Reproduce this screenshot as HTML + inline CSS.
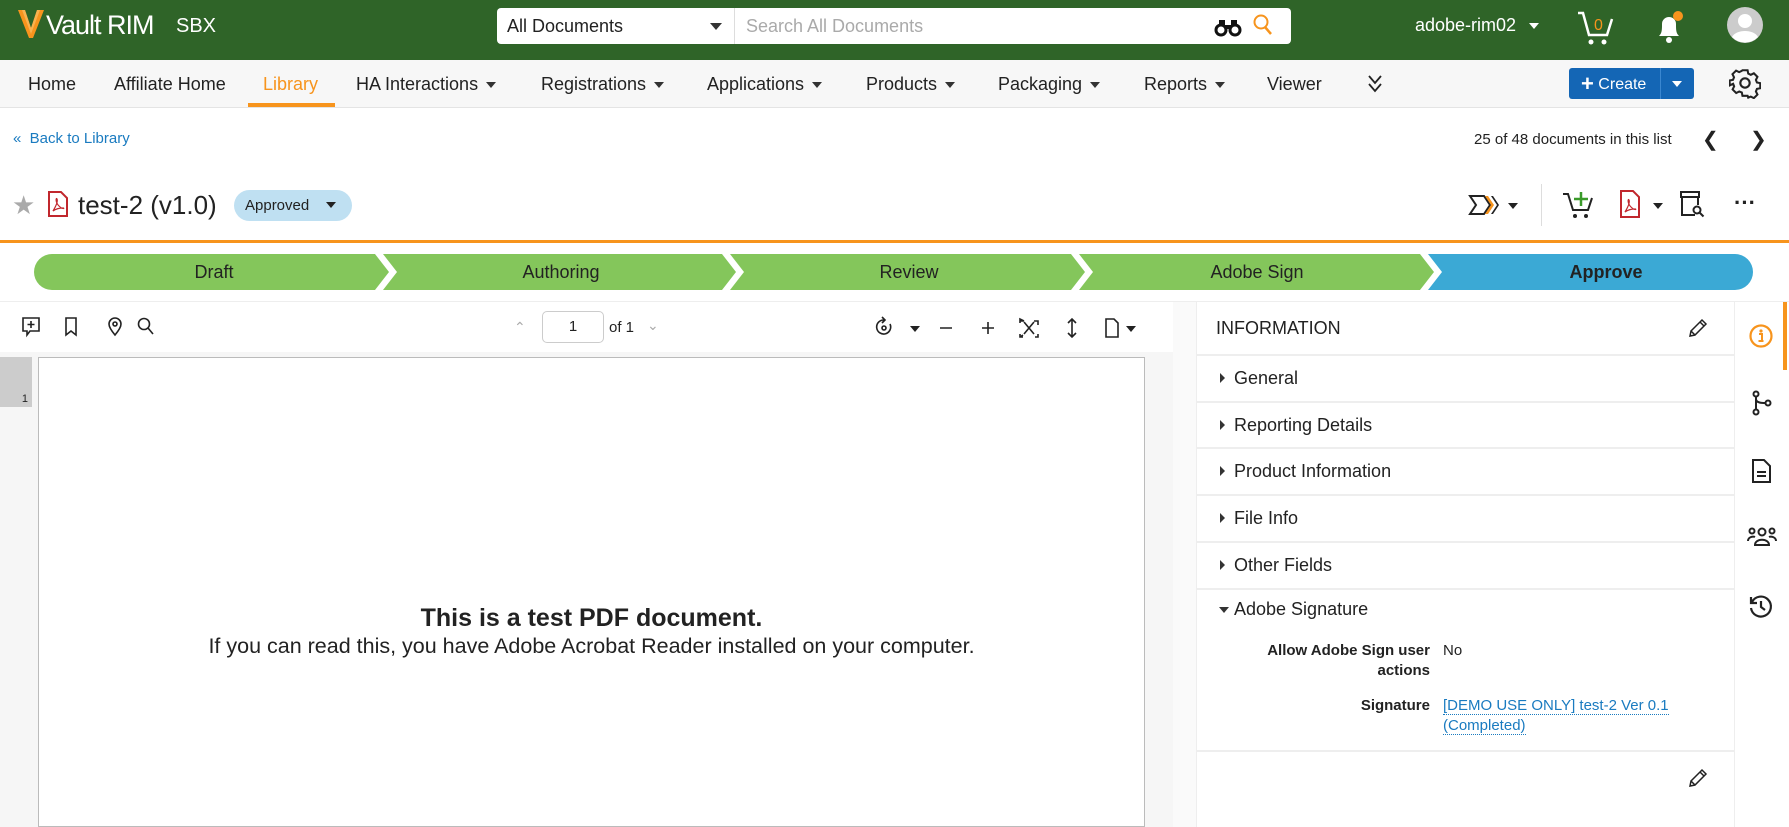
<!DOCTYPE html>
<html><head><meta charset="utf-8"><style>
*{box-sizing:border-box;margin:0;padding:0}
body{width:1789px;height:827px;overflow:hidden;font-family:"Liberation Sans",Arial,sans-serif;color:#222;background:#fff;position:relative}
.a{position:absolute}
.hdr{left:0;top:0;width:1789px;height:60px;background:#2f6428}
.nav{left:0;top:60px;width:1789px;height:48px;background:#f7f7f7;border-bottom:1px solid #e4e4e4}
.nav span{position:absolute;top:14px;font-size:18px;color:#222;white-space:nowrap}
.tri{display:inline-block;width:0;height:0;border-left:5px solid transparent;border-right:5px solid transparent;border-top:6px solid #333;vertical-align:middle;margin-left:8px}
.sec{left:1196px;width:538px;height:47px;border-top:2px solid #eee;font-size:18px;line-height:45px;padding-left:38px;position:absolute}
.sec:before{content:"";position:absolute;left:24px;top:17px;border-top:5px solid transparent;border-bottom:5px solid transparent;border-left:5px solid #333}
</style></head><body>
<div class="a hdr"></div>
<svg class="a" style="left:16px;top:8px" width="30" height="32" viewBox="0 0 30 32"><path d="M2 2h7l6 18 6-18h7L17 30h-4z" fill="#f7941d"/><path d="M6 2h3l6 18 6-18h3L15 26z" fill="#f9b24f"/></svg>
<div class="a" style="left:46px;top:10px;font-size:27px;color:#fff;letter-spacing:-1px">Vault<span style="font-weight:300"> RIM</span></div>
<div class="a" style="left:176px;top:15px;font-size:20px;color:#fff">SBX</div>
<div class="a" style="left:497px;top:8px;width:794px;height:36px;background:#fff;border-radius:4px"></div>
<div class="a" style="left:507px;top:16px;font-size:18px;color:#222">All Documents</div>
<div class="a" style="left:710px;top:23px;border-left:6px solid transparent;border-right:6px solid transparent;border-top:7px solid #333"></div>
<div class="a" style="left:734px;top:8px;width:1px;height:36px;background:#ddd"></div>
<div class="a" style="left:746px;top:16px;font-size:18px;color:#aaa">Search All Documents</div>
<svg class="a" style="left:1214px;top:17px" width="28" height="20" viewBox="0 0 28 20"><circle cx="7" cy="13" r="5" fill="none" stroke="#111" stroke-width="3"/><circle cx="21" cy="13" r="5" fill="none" stroke="#111" stroke-width="3"/><rect x="5" y="3" width="6" height="6" fill="#111"/><rect x="17" y="3" width="6" height="6" fill="#111"/><rect x="11" y="8" width="6" height="4" fill="#111"/></svg>
<svg class="a" style="left:1252px;top:13px" width="22" height="24" viewBox="0 0 22 24"><circle cx="9" cy="9" r="6.5" fill="none" stroke="#f7941d" stroke-width="2"/><path d="M13 14l6 7" stroke="#f7941d" stroke-width="2.5"/></svg>
<div class="a" style="left:1415px;top:15px;font-size:18px;color:#fff">adobe-rim02</div>
<div class="a" style="left:1529px;top:23px;border-left:5px solid transparent;border-right:5px solid transparent;border-top:6px solid #fff"></div>
<svg class="a" style="left:1576px;top:10px" width="42" height="36" viewBox="0 0 42 36"><path d="M2 3h5l6 22h18l5-16" fill="none" stroke="#fff" stroke-width="2.5"/><circle cx="15" cy="32" r="2.5" fill="#fff"/><circle cx="28" cy="32" r="2.5" fill="#fff"/><text x="18" y="20" font-size="16" fill="#f7941d" font-family="Liberation Sans">0</text></svg>
<svg class="a" style="left:1655px;top:10px" width="30" height="34" viewBox="0 0 30 34"><path d="M4 26c3-3 3-6 3-12a7 7 0 0 1 14 0c0 6 0 9 3 12z" fill="#fff"/><circle cx="14" cy="30" r="3" fill="#fff"/><circle cx="23" cy="6" r="5" fill="#f7941d"/></svg>
<svg class="a" style="left:1727px;top:7px" width="36" height="36" viewBox="0 0 36 36"><circle cx="18" cy="18" r="18" fill="#ccc"/><circle cx="18" cy="14" r="7" fill="#fff"/><path d="M5 30c4-8 22-8 26 0a18 18 0 0 1-26 0z" fill="#fff"/></svg>

<div class="a nav"><span style="left:28px">Home</span><span style="left:114px">Affiliate Home</span><span style="left:263px;color:#f7941d">Library</span><span style="left:356px">HA Interactions<i class="tri"></i></span><span style="left:541px">Registrations<i class="tri"></i></span><span style="left:707px">Applications<i class="tri"></i></span><span style="left:866px">Products<i class="tri"></i></span><span style="left:998px">Packaging<i class="tri"></i></span><span style="left:1144px">Reports<i class="tri"></i></span><span style="left:1267px">Viewer</span></div>
<svg class="a" style="left:1367px;top:74px" width="16" height="20" viewBox="0 0 16 20"><path d="M2 2l6 7 6-7M2 10l6 7 6-7" fill="none" stroke="#222" stroke-width="1.8"/></svg>
<div class="a" style="left:248px;top:103px;width:87px;height:4px;background:#f7941d"></div>
<div class="a" style="left:1569px;top:68px;width:125px;height:31px;background:#1466b5;border-radius:3px;color:#fff;font-size:16px;line-height:31px;padding-left:12px"><b style="font-size:22px;vertical-align:-2px">+</b> Create</div>
<div class="a" style="left:1660px;top:68px;width:1px;height:31px;background:#3b87d0"></div>
<div class="a" style="left:1672px;top:81px;border-left:5px solid transparent;border-right:5px solid transparent;border-top:6px solid #fff"></div>
<svg class="a" style="left:1729px;top:67px" width="32" height="32" viewBox="0 0 24 24"><path d="M12 8.5a3.5 3.5 0 1 0 0 7 3.5 3.5 0 0 0 0-7z" fill="none" stroke="#222" stroke-width="1.6"/><path d="M10 2h4l.5 2.6 2 1 2.4-1.2 2.8 2.8-1.2 2.4.8 2 2.6.5v4l-2.6.5-.8 2 1.2 2.4-2.8 2.8-2.4-1.2-2 .8L14 22h-4l-.5-2.6-2-.8-2.4 1.2-2.8-2.8 1.2-2.4-.8-2L0 13.9V10l2.6-.5.8-2-1.2-2.4 2.8-2.8 2.4 1.2 2-1z" fill="none" stroke="#222" stroke-width="1.6" transform="translate(.5 .5) scale(.96)"/></svg>

<div class="a" style="left:13px;top:130px;font-size:15px;color:#1a7bc0">«&nbsp; Back to Library</div>
<div class="a" style="left:1474px;top:131px;font-size:15px;color:#222">25 of 48 documents in this list</div>
<div class="a" style="left:1702px;top:127px;font-size:20px;color:#222">&#10094;</div>
<div class="a" style="left:1750px;top:127px;font-size:20px;color:#222">&#10095;</div>

<div class="a" style="left:12px;top:190px;font-size:26px;color:#aaa">&#9733;</div>
<svg class="a" style="left:47px;top:191px" width="22" height="26" viewBox="0 0 22 26"><path d="M2 1h12l6 6v18H2z" fill="#fff" stroke="#c1272d" stroke-width="2"/><path d="M6 20c3-5 5-10 4-12s-2 3 2 7 6 2 4 2-6 0-10 3z" fill="none" stroke="#c1272d" stroke-width="1.2"/></svg>
<div class="a" style="left:78px;top:190px;font-size:26px;color:#222">test-2 (v1.0)</div>
<div class="a" style="left:234px;top:190px;width:118px;height:31px;background:#bfe0f2;border-radius:16px;font-size:15px;line-height:31px;padding-left:11px">Approved</div>
<div class="a" style="left:326px;top:202px;border-left:5px solid transparent;border-right:5px solid transparent;border-top:6px solid #222"></div>
<svg class="a" style="left:1468px;top:193px" width="32" height="24" viewBox="0 0 32 24"><path d="M2 3h14l6 9-6 9H2l6-9z" fill="none" stroke="#222" stroke-width="2"/><path d="M17 3h3l6 9-6 9h-3l6-9z" fill="#f7941d"/><path d="M23 3h2l6 9-6 9h-2l6-9z" fill="#222"/></svg>
<div class="a" style="left:1508px;top:203px;border-left:5px solid transparent;border-right:5px solid transparent;border-top:6px solid #222"></div>
<div class="a" style="left:1541px;top:184px;width:1px;height:42px;background:#ddd"></div>
<svg class="a" style="left:1562px;top:190px" width="34" height="30" viewBox="0 0 34 30"><path d="M1 4h5l5 16h15l4-12" fill="none" stroke="#222" stroke-width="2"/><circle cx="13" cy="26" r="2" fill="#222"/><circle cx="24" cy="26" r="2" fill="#222"/><path d="M19 2v14M12 9h14" stroke="#3a9a2a" stroke-width="2.5"/></svg>
<svg class="a" style="left:1619px;top:190px" width="22" height="28" viewBox="0 0 22 28"><path d="M2 1h12l6 6v20H2z" fill="#fff" stroke="#c1272d" stroke-width="2"/><path d="M6 22c3-5 5-10 4-12s-2 3 2 7 6 2 4 2-6 0-10 3z" fill="none" stroke="#c1272d" stroke-width="1.2"/></svg>
<div class="a" style="left:1653px;top:203px;border-left:5px solid transparent;border-right:5px solid transparent;border-top:6px solid #222"></div>
<svg class="a" style="left:1679px;top:190px" width="26" height="28" viewBox="0 0 26 28"><rect x="2" y="2" width="18" height="5" fill="none" stroke="#222" stroke-width="2"/><path d="M3 7v18h13M19 7v8" fill="none" stroke="#222" stroke-width="2"/><circle cx="18" cy="20" r="3.5" fill="none" stroke="#222" stroke-width="2"/><path d="M20.5 22.5l4 4" stroke="#222" stroke-width="2"/></svg>
<div class="a" style="left:1734px;top:190px;font-size:22px;font-weight:bold;color:#222">&middot;&middot;&middot;</div>
<div class="a" style="left:0;top:240px;width:1789px;height:3px;background:#f7941d"></div>

<svg class="a" style="left:0;top:254px" width="1789" height="36" viewBox="0 0 1789 36">
<path d="M52 0H375L389 18 375 36H52A18 18 0 0 1 52 0z" fill="#84c65b"/>
<path d="M383 0H722L736 18 722 36H383L397 18z" fill="#84c65b"/>
<path d="M730 0H1071L1085 18 1071 36H730L744 18z" fill="#84c65b"/>
<path d="M1079 0H1420L1434 18 1420 36H1079L1093 18z" fill="#84c65b"/>
<path d="M1428 0H1735A18 18 0 0 1 1735 36H1428L1442 18z" fill="#3ba9d5"/>
</svg>
<div class="a" style="left:34px;top:262px;width:360px;text-align:center;font-size:18px">Draft</div>
<div class="a" style="left:389px;top:262px;width:344px;text-align:center;font-size:18px">Authoring</div>
<div class="a" style="left:737px;top:262px;width:344px;text-align:center;font-size:18px">Review</div>
<div class="a" style="left:1085px;top:262px;width:344px;text-align:center;font-size:18px">Adobe Sign</div>
<div class="a" style="left:1434px;top:262px;width:344px;text-align:center;font-size:18px;font-weight:bold">Approve</div>

<div class="a" style="left:0;top:301px;width:1789px;height:1px;background:#eee"></div>
<svg class="a" style="left:21px;top:316px" width="140" height="22" viewBox="0 0 140 22"><g fill="none" stroke="#222" stroke-width="1.6"><path d="M2 2h16v13H9l-3 4v-4H2z"/><path d="M10 5v7M6.5 8.5h7"/><path d="M45 2h10v17l-5-4-5 4z"/><path d="M94 19c-5-6-6-9-6-11a6 6 0 0 1 12 0c0 2-1 5-6 11z"/><circle cx="94" cy="8" r="2"/><circle cx="134" cy="8" r="5.5" transform="translate(-11 0)"/><path d="M127 12l5 6"/></g></svg>
<div class="a" style="left:514px;top:319px;font-size:14px;color:#aaa">&#8963;</div>
<div class="a" style="left:542px;top:311px;width:62px;height:32px;border:1px solid #ccc;border-radius:5px;text-align:center;line-height:30px;font-size:15px">1</div>
<div class="a" style="left:609px;top:319px;font-size:15px">of 1</div>
<div class="a" style="left:647px;top:317px;font-size:14px;color:#aaa">&#8964;</div>
<svg class="a" style="left:874px;top:316px" width="270" height="24" viewBox="0 0 270 24"><g fill="none" stroke="#222" stroke-width="1.6"><path d="M10 4a7 7 0 1 0 6 4"/><path d="M8 1l3 3-3 3"/><circle cx="10" cy="12" r="2"/><path d="M66 12h12M114 6v12M108 12h12"/><g transform="translate(19 0)"><path d="M131 5l-4-2v4M131 5h-4M141 5h4v4M130 19l-3 2M127 18v3h3M145 18v3h-3M131 6l10 12M141 6l-10 12"/></g><path d="M198 3v18M194 7l4-4 4 4M194 17l4 4 4-4M232 3h8l4 4v14h-12z"/></g><path d="M36 10h10l-5 6z M252 10h10l-5 6z" fill="#222"/></svg>
<div class="a" style="left:0;top:352px;width:1173px;height:475px;background:#f6f6f6"></div>
<div class="a" style="left:0;top:357px;width:32px;height:50px;background:#ccc;font-size:11px;text-align:right;padding:36px 4px 0 0">1</div>
<div class="a" style="left:38px;top:357px;width:1107px;height:470px;background:#fff;border:1px solid #bbb"></div>
<div class="a" style="left:38px;top:604px;width:1107px;text-align:center;font-size:25px;font-weight:bold">This is a test PDF document.</div>
<div class="a" style="left:38px;top:634px;width:1107px;text-align:center;font-size:21.5px">If you can read this, you have Adobe Acrobat Reader installed on your computer.</div>
<div class="a" style="left:1173px;top:302px;width:23px;height:525px;background:#fafafa"></div>
<div class="a" style="left:1196px;top:302px;width:1px;height:525px;background:#eee"></div>
<div class="a" style="left:1216px;top:318px;font-size:18px;color:#222">INFORMATION</div>
<svg class="a" style="left:1687px;top:317px" width="22" height="22" viewBox="0 0 22 22"><path d="M3 19l1-5L15 3l4 4L8 18zM13 5l4 4M4 14l4 4" fill="none" stroke="#222" stroke-width="1.5"/></svg>
<div class="sec" style="top:354px">General</div>
<div class="sec" style="top:401px">Reporting Details</div>
<div class="sec" style="top:447px">Product Information</div>
<div class="sec" style="top:494px">File Info</div>
<div class="sec" style="top:541px">Other Fields</div>
<div class="a" style="left:1196px;top:588px;width:538px;height:2px;background:#eee"></div>
<div class="a" style="left:1234px;top:599px;font-size:18px">Adobe Signature</div>
<div class="a" style="left:1219px;top:607px;border-left:5px solid transparent;border-right:5px solid transparent;border-top:6px solid #333"></div>
<div class="a" style="left:1240px;top:641px;width:190px;text-align:right;font-size:15px;font-weight:bold;line-height:20px">Allow Adobe Sign user actions</div>
<div class="a" style="left:1443px;top:641px;font-size:15px;line-height:20px">No</div>
<div class="a" style="left:1240px;top:696px;width:190px;text-align:right;font-size:15px;font-weight:bold;line-height:20px">Signature</div>
<div class="a" style="left:1443px;top:696px;font-size:15px;line-height:20px;color:#1a7bc0;width:240px"><span style="border-bottom:1px dotted #1a7bc0">[DEMO USE ONLY] test-2 Ver 0.1</span><br><span style="border-bottom:1px dotted #1a7bc0">(Completed)</span></div>
<div class="a" style="left:1196px;top:750px;width:538px;height:2px;background:#eee"></div>
<svg class="a" style="left:1687px;top:767px" width="22" height="22" viewBox="0 0 22 22"><path d="M3 19l1-5L15 3l4 4L8 18zM13 5l4 4M4 14l4 4" fill="none" stroke="#222" stroke-width="1.5"/></svg>
<div class="a" style="left:1734px;top:302px;width:1px;height:525px;background:#eee"></div>
<div class="a" style="left:1783px;top:302px;width:4px;height:68px;background:#f7941d"></div>
<svg class="a" style="left:1748px;top:323px" width="26" height="26" viewBox="0 0 26 26"><circle cx="13" cy="13" r="10.5" fill="none" stroke="#f7941d" stroke-width="2.2"/><circle cx="13" cy="8" r="1.6" fill="#f7941d"/><path d="M11 11h3v7M10.5 18h5" stroke="#f7941d" stroke-width="2" fill="none"/></svg>
<svg class="a" style="left:1750px;top:390px" width="24" height="26" viewBox="0 0 24 26"><g fill="none" stroke="#222" stroke-width="2"><circle cx="6" cy="4" r="2.5"/><circle cx="6" cy="22" r="2.5"/><circle cx="18" cy="13" r="2.5"/><path d="M6 6.5v13M6 9c0 4 6 4 9.5 4"/></g></svg>
<svg class="a" style="left:1751px;top:458px" width="22" height="26" viewBox="0 0 22 26"><g fill="none" stroke="#222" stroke-width="2"><path d="M2 2h11l6 6v16H2z"/><path d="M6 14h9M6 18h9"/></g></svg>
<svg class="a" style="left:1746px;top:525px" width="32" height="26" viewBox="0 0 32 26"><g fill="none" stroke="#222" stroke-width="2"><circle cx="16" cy="7" r="3.5"/><circle cx="6" cy="6" r="2.5"/><circle cx="26" cy="6" r="2.5"/><path d="M9 20c0-7 14-7 14 0zM2 16c0-4 5-5 7-4M30 16c0-4-5-5-7-4"/></g></svg>
<svg class="a" style="left:1748px;top:594px" width="26" height="26" viewBox="0 0 26 26"><g fill="none" stroke="#222" stroke-width="2.2"><path d="M4 8a10 10 0 1 1-1 6"/><path d="M3 3v6h6"/><path d="M13 7v6l4 3"/></g></svg>
</body></html>
